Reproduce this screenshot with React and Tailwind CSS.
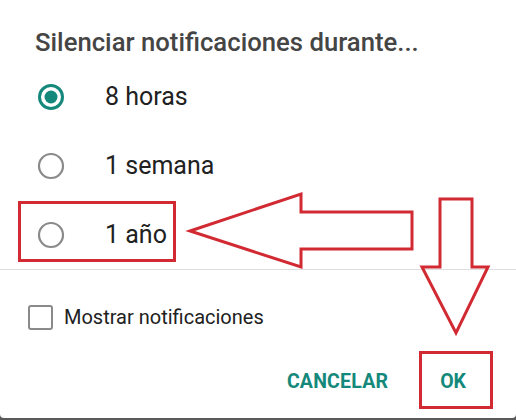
import React, { useState } from 'react';

const teal = '#14897b';

function Radio({ checked }) {
  return (
    <svg width="28" height="28" viewBox="0 0 28 28">
      {checked ? (
        <>
          <circle cx="14" cy="14" r="11.5" fill="none" stroke={teal} strokeWidth="3" />
          <circle cx="14" cy="14" r="6.5" fill={teal} />
        </>
      ) : (
        <circle cx="14" cy="14" r="12" fill="none" stroke="#8a8a8a" strokeWidth="2.2" />
      )}
    </svg>
  );
}

export default function App() {
  const [selected, setSelected] = useState('8h');
  const options = [
    { id: '8h', label: '8 horas' },
    { id: '1w', label: '1 semana' },
    { id: '1y', label: '1 año' },
  ];

  return (
    <div className="h-[420px] w-[516px] bg-[#5a5a5a]" style={{ fontFamily: 'Roboto, "Noto Sans", sans-serif' }}>
      <div className="relative flex h-[418px] flex-col overflow-hidden rounded-b-[4px] bg-white">
        {/* Title */}
        <h1 className="mt-[22px] pl-[35px] text-[25.7px] leading-[40px] font-medium text-[#454545]">
          Silenciar notificaciones durante...
        </h1>

        {/* Options */}
        <div className="flex flex-col">
          {options.map((o) => (
            <button
              key={o.id}
              onClick={() => setSelected(o.id)}
              className="flex h-[69px] items-center pl-[37px] text-left"
            >
              <Radio checked={selected === o.id} />
              <span className="ml-[40px] text-[25px] text-[#212121]">{o.label}</span>
            </button>
          ))}
        </div>

        <div className="h-px bg-[#dedede]" />

        {/* Checkbox */}
        <label className="mt-[27px] flex h-[40px] items-center pl-[28px]">
          <span className="h-[25px] w-[25px] rounded-[3px] border-[2.5px] border-[#8a8a8a]" />
          <span className="ml-[11px] text-[20px] text-[#212121]">Mostrar notificaciones</span>
        </label>

        {/* Buttons */}
        <div className="mt-[25px] flex h-[40px] items-center justify-end gap-[52px] pr-[50px]">
          <button className="text-[19.5px] font-bold tracking-[0.2px] text-[#14897b]">CANCELAR</button>
          <button className="text-[19.5px] font-bold text-[#14897b]">OK</button>
        </div>

        {/* Red annotations */}
        <svg className="pointer-events-none absolute inset-0" width="516" height="418" viewBox="0 0 516 418">
          <g fill="none" stroke="#d12a32" strokeWidth="3" strokeLinejoin="miter">
            <rect x="19.5" y="202.5" width="155" height="58" />
            <polygon points="190,231 301,194 301,212 412,212 412,249 301,249 301,267" />
            <polygon points="440,199 472,199 472,267 488,267 456,333 422,267 440,267" />
            <rect x="420.5" y="352.5" width="71" height="55" />
          </g>
        </svg>
      </div>
    </div>
  );
}
